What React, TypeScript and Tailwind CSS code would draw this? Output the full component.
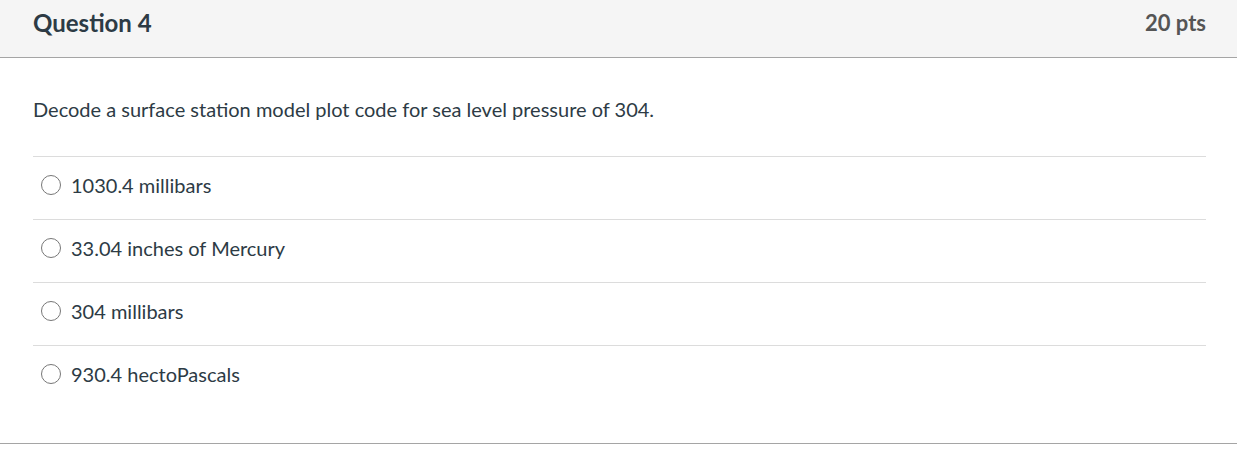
import React from "react";

const answers = [
  "1030.4 millibars",
  "33.04 inches of Mercury",
  "304 millibars",
  "930.4 hectoPascals",
];

export default function App() {
  return (
    <div className="w-[1237px] h-[454px] bg-white font-['Lato',sans-serif] text-[#2d3b45]">
      {/* Header */}
      <div className="h-[58px] bg-[#f5f5f5] border-b border-[#a5a5a5] flex items-center justify-between pl-[33px] pr-[31px]">
        <h2 className="text-[24px] font-bold leading-none -mt-[11px]">Question 4</h2>
        <span className="text-[22px] font-bold text-[#555] leading-none -mt-[11px]">20 pts</span>
      </div>

      {/* Body */}
      <div className="px-[33px] pr-[31px] border-b border-[#a5a5a5] h-[386px]">
        <p className="text-[20px] pt-[39px] pb-[35px] leading-[24px]">
          Decode a surface station model plot code for sea level pressure of 304.
        </p>
        <div className="flex flex-col">
          {answers.map((a) => (
            <label
              key={a}
              className="h-[63px] border-t border-[#dcdcdc] flex items-center gap-[10px] pl-[8px] pb-[7px] cursor-pointer"
            >
              <span className="w-[20px] h-[20px] rounded-full border-[1.5px] border-[#777] bg-white shrink-0" />
              <span className="text-[20px] leading-none">{a}</span>
            </label>
          ))}
        </div>
      </div>
    </div>
  );
}
